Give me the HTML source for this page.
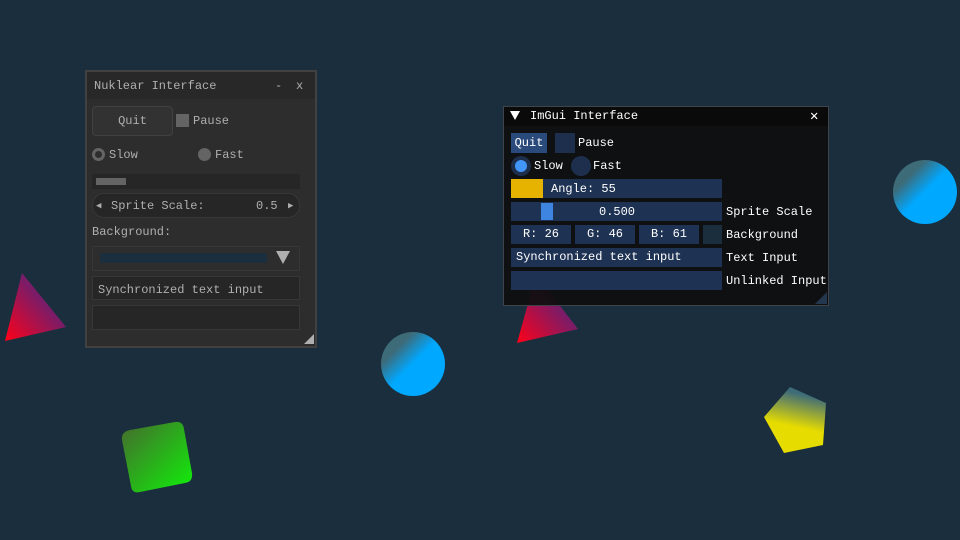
<!DOCTYPE html>
<html><head><meta charset="utf-8"><style>
*{margin:0;padding:0;box-sizing:border-box}
body{width:960px;height:540px;background:#1a2e3d;position:relative;overflow:hidden;font-family:"Liberation Mono",monospace;font-size:12px}
.a{position:absolute}
.nt{color:#afafaf}
.it{color:#fff}
</style></head><body>
<svg class="a" style="left:0;top:0" width="960" height="540">
<defs>
<linearGradient id="tr" x1="0" y1="1" x2="1" y2="0"><stop offset="0" stop-color="#ff0018"/><stop offset="0.6" stop-color="#7a1c68"/></linearGradient>
<linearGradient id="ci" x1="0" y1="0" x2="1" y2="1"><stop offset="0.25" stop-color="#3e6b78"/><stop offset="0.5" stop-color="#00a8ff"/></linearGradient>
<linearGradient id="gr" x1="0" y1="0" x2="1" y2="1"><stop offset="0" stop-color="#466a2e"/><stop offset="1" stop-color="#10f00a"/></linearGradient>
<linearGradient id="pe" x1="0.6" y1="0" x2="0.4" y2="1"><stop offset="0.1" stop-color="#3e6b78"/><stop offset="0.6" stop-color="#e6dc00"/></linearGradient>
</defs>
<polygon points="22,273 66,327 5,341" fill="url(#tr)"/>
<polygon points="536,275 578,329 517,343" fill="url(#tr)"/>
<circle cx="413" cy="364" r="32" fill="url(#ci)"/>
<circle cx="925" cy="192" r="32" fill="url(#ci)"/>
<path d="M130,430 L175,422 Q183,421 184,429 L192,473 Q193,482 185,483 L140,492 Q132,494 131,486 L122,440 Q121,432 130,430Z" fill="url(#gr)"/>
<polygon points="790,387 826,403 823,445 784,453 764,417" fill="url(#pe)"/>
</svg>

<!-- Nuklear -->
<div class="a" style="left:85px;top:70px;width:232px;height:278px;background:#2d2d2d;border:2px solid #414141"></div>
<div class="a" style="left:87px;top:72px;width:228px;height:27px;background:#282828"></div>
<div class="a nt" style="left:94px;top:79px">Nuklear Interface</div>
<div class="a nt" style="left:275px;top:79px">-</div>
<div class="a nt" style="left:296px;top:79px">x</div>
<div class="a nt" style="left:92px;top:106px;width:81px;height:30px;border:1px solid #414141;border-radius:4px;background:#323232;text-align:center;line-height:28px">Quit</div>
<div class="a" style="left:176px;top:114px;width:13px;height:13px;background:#646464"></div>
<div class="a nt" style="left:193px;top:114px">Pause</div>
<div class="a" style="left:92px;top:148px;width:13px;height:13px;border-radius:50%;background:#646464"></div>
<div class="a" style="left:95px;top:151px;width:7px;height:7px;border-radius:50%;background:#2d2d2d"></div>
<div class="a nt" style="left:109px;top:148px">Slow</div>
<div class="a" style="left:198px;top:148px;width:13px;height:13px;border-radius:50%;background:#646464"></div>
<div class="a nt" style="left:215px;top:148px">Fast</div>
<div class="a" style="left:92px;top:174px;width:208px;height:15px;background:#262626"></div>
<div class="a" style="left:96px;top:178px;width:30px;height:7px;background:#646464"></div>
<div class="a" style="left:92px;top:193px;width:208px;height:25px;background:#262626;border:1px solid #373737;border-radius:12px"></div>
<div class="a nt" style="left:96px;top:201px;font-size:9px">◀</div>
<div class="a nt" style="left:111px;top:199px">Sprite Scale:</div>
<div class="a nt" style="left:256px;top:199px">0.5</div>
<div class="a nt" style="left:288px;top:201px;font-size:9px">▶</div>
<div class="a nt" style="left:92px;top:225px">Background:</div>
<div class="a" style="left:92px;top:246px;width:208px;height:25px;background:#2d2d2d;border:1px solid #373737"></div>
<div class="a" style="left:100px;top:253px;width:167px;height:10px;background:#1a2e3d"></div>
<svg class="a" style="left:276px;top:251px" width="15" height="14"><polygon points="0,0 14,0 7,13" fill="#afafaf"/></svg>
<div class="a nt" style="left:92px;top:276px;width:208px;height:24px;background:#262626;border:1px solid #373737;padding-left:5px;padding-top:2px;line-height:22px">Synchronized text input</div>
<div class="a" style="left:92px;top:305px;width:208px;height:25px;background:#262626;border:1px solid #373737"></div>
<svg class="a" style="left:304px;top:334px" width="11" height="11"><polygon points="10,0 10,10 0,10" fill="#afafaf"/></svg>

<!-- ImGui -->
<div class="a" style="left:503px;top:106px;width:326px;height:200px;background:rgba(15,15,15,0.94);border:1px solid #41434a"></div>
<div class="a" style="left:504px;top:107px;width:324px;height:19px;background:#0a0a0a"></div>
<svg class="a" style="left:510px;top:111px" width="10" height="9"><polygon points="0,0 10,0 5,9" fill="#fff"/></svg>
<div class="a it" style="left:530px;top:109px">ImGui Interface</div>
<div class="a it" style="left:810px;top:108px;font-size:14px">✕</div>
<div class="a it" style="left:511px;top:133px;width:36px;height:20px;background:#294a7a;text-align:center;line-height:20px">Quit</div>
<div class="a" style="left:555px;top:133px;width:20px;height:20px;background:#1d2f4d"></div>
<div class="a it" style="left:578px;top:136px">Pause</div>
<div class="a" style="left:511px;top:156px;width:20px;height:20px;border-radius:50%;background:#1d2f4d"></div>
<div class="a" style="left:515px;top:160px;width:12px;height:12px;border-radius:50%;background:#4296fa"></div>
<div class="a it" style="left:534px;top:159px">Slow</div>
<div class="a" style="left:571px;top:156px;width:20px;height:20px;border-radius:50%;background:#1d2f4d"></div>
<div class="a it" style="left:593px;top:159px">Fast</div>
<div class="a" style="left:511px;top:179px;width:211px;height:19px;background:#1e3253"></div>
<div class="a" style="left:511px;top:179px;width:32px;height:19px;background:#e6b400"></div>
<div class="a it" style="left:551px;top:182px">Angle: 55</div>
<div class="a" style="left:511px;top:202px;width:211px;height:19px;background:#1e3253"></div>
<div class="a" style="left:541px;top:203px;width:12px;height:17px;background:#3d85e0"></div>
<div class="a it" style="left:599px;top:205px">0.500</div>
<div class="a it" style="left:726px;top:205px">Sprite Scale</div>
<div class="a it" style="left:511px;top:225px;width:60px;height:19px;background:#1e3253;text-align:center;line-height:19px">R: 26</div>
<div class="a it" style="left:575px;top:225px;width:60px;height:19px;background:#1e3253;text-align:center;line-height:19px">G: 46</div>
<div class="a it" style="left:639px;top:225px;width:60px;height:19px;background:#1e3253;text-align:center;line-height:19px">B: 61</div>
<div class="a" style="left:703px;top:225px;width:19px;height:19px;background:#1a2e3d"></div>
<div class="a it" style="left:726px;top:228px">Background</div>
<div class="a it" style="left:511px;top:248px;width:211px;height:19px;background:#1e3253;padding-left:5px;line-height:19px">Synchronized text input</div>
<div class="a it" style="left:726px;top:251px">Text Input</div>
<div class="a" style="left:511px;top:271px;width:211px;height:19px;background:#1e3253"></div>
<div class="a it" style="left:726px;top:274px">Unlinked Input</div>
<svg class="a" style="left:815px;top:292px" width="13" height="13"><polygon points="12,0 12,12 0,12" fill="#25364f"/></svg>
</body></html>
